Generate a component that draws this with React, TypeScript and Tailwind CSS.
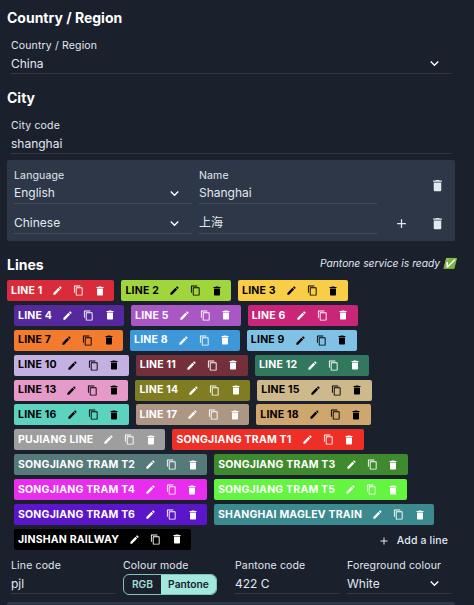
import { MdAdd, MdContentCopy, MdDelete, MdEdit, MdExpandMore } from 'react-icons/md';

type Line = {
	name: string;
	bg: string;
	fg: string;
};

const rows: { className: string; lines: Line[] }[] = [
	{
		className: 'pl-[7px]',
		lines: [
			{ name: 'LINE 1', bg: 'bg-[#d92b3a]', fg: 'text-white' },
			{ name: 'LINE 2', bg: 'bg-[#a0d63b]', fg: 'text-black' },
			{ name: 'LINE 3', bg: 'bg-[#f9ce46]', fg: 'text-black' },
		],
	},
	{
		className: 'pl-[14px]',
		lines: [
			{ name: 'LINE 4', bg: 'bg-[#55299b]', fg: 'text-white' },
			{ name: 'LINE 5', bg: 'bg-[#a857c4]', fg: 'text-white' },
			{ name: 'LINE 6', bg: 'bg-[#c9267a]', fg: 'text-white' },
		],
	},
	{
		className: 'pl-[14px]',
		lines: [
			{ name: 'LINE 7', bg: 'bg-[#f37b2e]', fg: 'text-black' },
			{ name: 'LINE 8', bg: 'bg-[#3d97d8]', fg: 'text-white' },
			{ name: 'LINE 9', bg: 'bg-[#7fc2e5]', fg: 'text-black' },
		],
	},
	{
		className: 'pl-[14px]',
		lines: [
			{ name: 'LINE 10', bg: 'bg-[#c4b1e2]', fg: 'text-black' },
			{ name: 'LINE 11', bg: 'bg-[#74303a]', fg: 'text-white' },
			{ name: 'LINE 12', bg: 'bg-[#31785f]', fg: 'text-white' },
		],
	},
	{
		className: 'pl-[14px]',
		lines: [
			{ name: 'LINE 13', bg: 'bg-[#e59ac9]', fg: 'text-black' },
			{ name: 'LINE 14', bg: 'bg-[#7f7c22]', fg: 'text-white' },
			{ name: 'LINE 15', bg: 'bg-[#cdb98c]', fg: 'text-black' },
		],
	},
	{
		className: 'pl-[14px]',
		lines: [
			{ name: 'LINE 16', bg: 'bg-[#5bd3bf]', fg: 'text-black' },
			{ name: 'LINE 17', bg: 'bg-[#ad9784]', fg: 'text-white' },
			{ name: 'LINE 18', bg: 'bg-[#cfa66e]', fg: 'text-black' },
		],
	},
	{
		className: 'pl-[14px]',
		lines: [
			{ name: 'PUJIANG LINE', bg: 'bg-[#9e9e9e]', fg: 'text-white' },
			{ name: 'SONGJIANG TRAM T1', bg: 'bg-[#ee2f27]', fg: 'text-white' },
		],
	},
	{
		className: 'pl-[14px]',
		lines: [
			{ name: 'SONGJIANG TRAM T2', bg: 'bg-[#557a79]', fg: 'text-white' },
			{ name: 'SONGJIANG TRAM T3', bg: 'bg-[#3f8a2e]', fg: 'text-white' },
		],
	},
	{
		className: 'pl-[14px]',
		lines: [
			{ name: 'SONGJIANG TRAM T4', bg: 'bg-[#e92dee]', fg: 'text-white' },
			{ name: 'SONGJIANG TRAM T5', bg: 'bg-[#63f53f]', fg: 'text-white' },
		],
	},
	{
		className: 'pl-[14px]',
		lines: [
			{ name: 'SONGJIANG TRAM T6', bg: 'bg-[#5b16c9]', fg: 'text-white' },
			{ name: 'SHANGHAI MAGLEV TRAIN', bg: 'bg-[#3a8a90]', fg: 'text-white' },
		],
	},
];

function LineTag({ line }: { line: Line }) {
	return (
		<div className={`flex h-[21px] items-center rounded-[2px] pl-[4px] pr-[4px] ${line.bg} ${line.fg}`}>
			<span className="mr-[5px] text-[10.5px] font-bold tracking-[0.2px] whitespace-nowrap">{line.name}</span>
			<span className="flex w-[21px] justify-center"><MdEdit size={11} /></span>
			<span className="flex w-[21px] justify-center"><MdContentCopy size={11} /></span>
			<span className="flex w-[21px] justify-center"><MdDelete size={12} /></span>
		</div>
	);
}

function Field({ label, value, select, className }: { label?: string; value: string; select?: boolean; className?: string }) {
	return (
		<div className={className}>
			{label && <div className="h-[17px] text-[10.5px] leading-[17px] tracking-[0.15px] text-[#e2e8f0]">{label}</div>}
			<div className="flex h-[20px] items-center justify-between border-b border-white/10 text-[12px] text-[#e2e8f0]">
				<span>{value}</span>
				{select && <MdExpandMore size={17} className="mr-[9px] text-white" />}
			</div>
		</div>
	);
}

export default function App() {
	return (
		<div className="h-[605px] w-[474px] overflow-hidden bg-[#1a202c] font-['Inter','Noto_Sans_CJK_SC',sans-serif] text-white">
			<h2 className="pl-[7px] pt-[8px] text-[14px] leading-[20px] font-bold">Country / Region</h2>
			<div className="mt-[9px] px-[11px] pr-[22px]">
				<Field label="Country / Region" value="China" select />
			</div>
			<h2 className="mt-[14px] pl-[7px] text-[14px] leading-[20px] font-bold">City</h2>
			<div className="mt-[9px] px-[11px] pr-[22px]">
				<Field label="City code" value="shanghai" />
			</div>

			<div className="mt-[6px] ml-[7px] h-[81px] w-[448px] rounded-[2px] bg-[#2d3748] px-[7px] pt-[6.5px]">
				<div className="flex items-center">
					<Field label="Language" value="English" select className="w-[178px]" />
					<Field label="Name" value="Shanghai" className="ml-[7px] w-[178px]" />
					<span className="ml-[53px] text-[#e2e8f0]"><MdDelete size={15} /></span>
				</div>
				<div className="mt-[10px] flex items-center">
					<Field value="Chinese" select className="w-[178px]" />
					<Field value="上海" className="ml-[7px] w-[178px]" />
					<span className="ml-[17px] text-[#e2e8f0]"><MdAdd size={15} /></span>
					<span className="ml-[21px] text-[#e2e8f0]"><MdDelete size={15} /></span>
				</div>
			</div>

			<div className="mt-[12px] flex h-[22px] w-[456px] items-center justify-between pl-[7px]">
				<h2 className="text-[14px] font-bold">Lines</h2>
				<span className="text-[10.25px] text-[#e2e8f0] italic">Pantone service is ready ✅</span>
			</div>

			<div className="mt-[5px] flex flex-col gap-[3.9px]">
				{rows.map((row, i) => (
					<div key={i} className={`flex gap-[7px] ${row.className}`}>
						{row.lines.map((line) => (
							<LineTag key={line.name} line={line} />
						))}
					</div>
				))}
				<div className="flex items-center justify-between pl-[14px] pr-[26px]">
					<LineTag line={{ name: 'JINSHAN RAILWAY', bg: 'bg-black', fg: 'text-white' }} />
					<div className="mt-[3px] flex items-center text-[10.5px] font-medium tracking-[0.15px] text-[#e2e8f0]">
						<MdAdd size={12} className="mr-[7px]" />
						Add a line
					</div>
				</div>
			</div>

			<div className="mt-[7.5px] grid w-[452px] grid-cols-4 gap-[7px] pl-[11px]">
				<Field label="Line code" value="pjl" />
				<div>
					<div className="h-[17px] text-[10.5px] leading-[17px] tracking-[0.15px] text-[#e2e8f0]">Colour mode</div>
					<div className="flex h-[21px] w-[94px] items-center overflow-hidden rounded-[6px] border border-[#7fc4bc] text-[10.25px] font-semibold">
						<span className="flex h-full w-[37px] items-center justify-center text-[#a5dcd6]">RGB</span>
						<span className="flex h-full flex-1 items-center justify-center bg-[#a3e8dd] text-[#1a202c]">Pantone</span>
					</div>
				</div>
				<Field label="Pantone code" value="422 C" />
				<Field label="Foreground colour" value="White" select />
			</div>
			<div className="mt-[7px] ml-[7px] h-[10px] w-[448px] rounded-t-[2px] bg-[#2d3748]" />
		</div>
	);
}
